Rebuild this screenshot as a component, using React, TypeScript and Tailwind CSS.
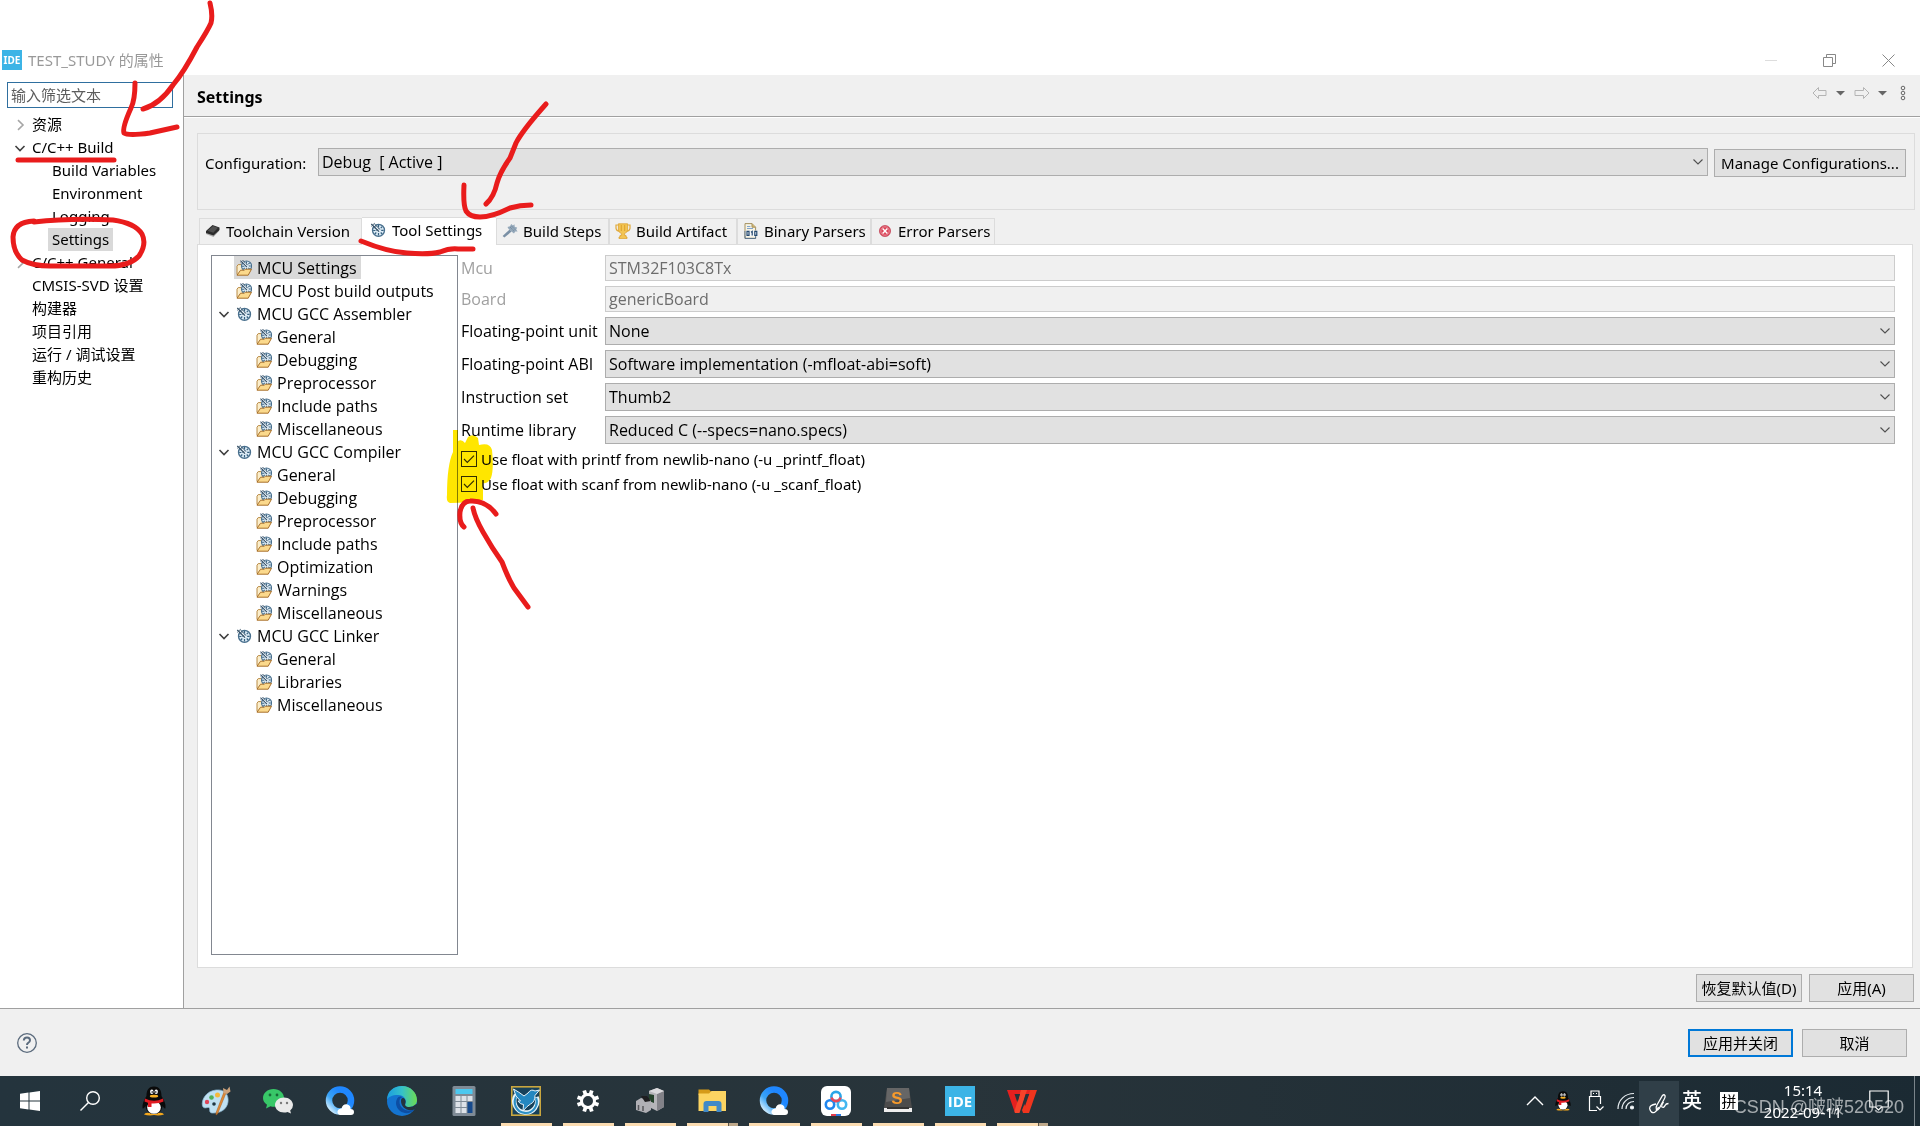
import React from 'react';

type IconProps = { className?: string };

const fontStack = 'font-["Noto_Sans","Noto_Sans_CJK_SC",sans-serif]';
const contentText = 'font-["Open_Sans","Noto_Sans_CJK_SC",sans-serif] text-[16px] leading-5';

function Chevron({ open }: { open: boolean }) {
  return (
    <svg viewBox="0 0 12 12" className="size-3 shrink-0" fill="none" aria-hidden="true">
      {open ? (
        <path d="M1.5 4 L6 8.5 L10.5 4" stroke="#404040" strokeWidth="1.6" />
      ) : (
        <path d="M4 1.2 L9 6 L4 10.8" stroke="#a6a6a6" strokeWidth="1.6" />
      )}
    </svg>
  );
}

function Dial() {
  return (
    <g>
      <circle cx="8.5" cy="8.3" r="6" fill="#dcebf6" stroke="#486f8d" strokeWidth="1.3" />
      <path d="M8.5 3v2.4M13.6 8.3h-2.4M8.5 13.4v-2.4M3.2 8.5h2.2M12.2 4.6l-1.5 1.5M12.2 12l-1.5-1.5M4.8 12l1.5-1.5" stroke="#35607f" strokeWidth="1.2" />
      <path d="M1.3 2 L9 9.7" stroke="#2f4a60" strokeWidth="1.2" />
      <path d="M2.8 1.8 L10 9" stroke="#eef4f8" strokeWidth="1" />
      <path d="M4.2 1.6 L10.4 7.8" stroke="#2f4a60" strokeWidth="1" strokeDasharray="1.6 .5" />
      <path d="M1.3 4.4 L4.4 1.4M4 6.4L6.6 3.8M6.4 8.8L9 6.2" stroke="#456178" strokeWidth=".9" />
    </g>
  );
}

function DialIcon({ className = 'size-4' }: IconProps) {
  return (
    <svg viewBox="0 0 16 16" className={className + ' shrink-0'} fill="none" aria-hidden="true">
      <Dial />
    </svg>
  );
}

function FolderIcon() {
  return (
    <svg viewBox="0 0 16 16" className="size-4 shrink-0" fill="none" aria-hidden="true">
      <path d="M1 14.5V6.2L2.2 4.6h3L6.4 6H11v4" fill="#fbeecb" stroke="#b98a45" />
      <g transform="translate(3.4 -1) scale(.84)">
        <Dial />
      </g>
      <path d="M1 15.2 L4.6 10.2H8.3L9.3 9.2H15.5L12.2 15.2Z" fill="#fbd98c" stroke="#a9702c" />
    </svg>
  );
}

function ChipIcon() {
  return (
    <svg viewBox="0 0 16 16" className="size-4 shrink-0" aria-hidden="true">
      <path d="M1 8.500v2.400L8.500 14l5.500-6V6L8 8Z" fill="#a8a8a8" />
      <path d="M1 8 L7.5 2 L14.500 4.5 V7 L8.500 12.5 L1 10Z" fill="#2b2b2b" />
      <path d="M2.5 7.8 L8 3 L13 4.700 L8.3 9.8Z" fill="#505050" />
    </svg>
  );
}

function HammerIcon() {
  return (
    <svg viewBox="0 0 16 16" className="size-4 shrink-0" aria-hidden="true">
      <path d="M7.6 6.6 L9.600 8.6 L2.4 14.600 L.6 13Z" fill="#7a90a5" />
      <path d="M5.500 4 L8 3.200 L9.200 1 L11 2.400 L12.400 1.2 L12.800 4 L15.200 4.600 L14.200 6.600 L15.600 8.400 L13.2 8.600 L12 10.400 L10.4 9.2 L6.6 6Z" fill="#93a7b9" />
      <path d="M9.500 3l4 4M8 4l4 4" stroke="#6c8297" strokeWidth="1" strokeDasharray="1 1" />
    </svg>
  );
}

function TrophyIcon() {
  return (
    <svg viewBox="0 0 16 16" className="size-4 shrink-0" fill="none" aria-hidden="true">
      <path d="M3.6 2H1v3.4Q1.4 8 4.6 8.4M12.4 2H15v3.4Q14.6 8 11.4 8.4" stroke="#e0a93a" strokeWidth="1.2" />
      <path d="M3.4.8H12.6V7Q12 10 9.4 10.6V12.4H11V14H12V15.6H4V14H5V12.4H6.6V10.6Q4 10 3.4 7Z" fill="#f3c553" stroke="#dca12f" strokeWidth=".8" />
      <path d="M6.3 2v6M9.7 2v6" stroke="#dca12f" />
    </svg>
  );
}

function BinaryIcon() {
  return (
    <svg viewBox="0 0 16 16" className="size-4 shrink-0" fill="none" aria-hidden="true">
      <path d="M2 .6H9L12.6 4.2V15.4H2Z" fill="#f6f3e4" stroke="#a59160" />
      <path d="M2 8V15.4H12.6V13" stroke="#54708e" />
      <path d="M9 .6V4.2H12.6" fill="#d5b871" stroke="#a59160" />
      <path d="M4 3.5h3.4M4 5.5h6" stroke="#7fa3cd" />
      <path d="M2.8 7.6H14.8V13.2H2.8Z" fill="#f6f7f9" />
      <path d="M4 8.4h2v4H4ZM9.2 12.6V8.4L8 9.2M11.8 8.4h2v4h-2Z" stroke="#24486f" strokeWidth="1.2" />
    </svg>
  );
}

function ErrorIcon() {
  return (
    <svg viewBox="0 0 16 16" className="size-4 shrink-0" fill="none" aria-hidden="true">
      <circle cx="8" cy="8" r="5.6" fill="#dc4458" stroke="#b8384c" strokeWidth=".6" />
      <path d="M5.6 5.6l4.8 4.8M10.4 5.6l-4.8 4.8" stroke="#fff" strokeWidth="1.4" />
      <circle cx="8" cy="8" r="4.2" stroke="#f0b9c0" strokeWidth=".6" />
    </svg>
  );
}

type Page = { label: string; level: number; open?: boolean; selected?: boolean };

const pages: Page[] = [
  { label: '资源', level: 0, open: false },
  { label: 'C/C++ Build', level: 0, open: true },
  { label: 'Build Variables', level: 1 },
  { label: 'Environment', level: 1 },
  { label: 'Logging', level: 1 },
  { label: 'Settings', level: 1, selected: true },
  { label: 'C/C++ General', level: 0, open: false },
  { label: 'CMSIS-SVD 设置', level: 0 },
  { label: '构建器', level: 0 },
  { label: '项目引用', level: 0 },
  { label: '运行 / 调试设置', level: 0 },
  { label: '重构历史', level: 0 },
];

function Sidebar() {
  return (
    <aside className="w-[184px] shrink-0 border-r border-[#a0a0a0] bg-white pt-[7px]">
      <input
        aria-label="输入筛选文本"
        placeholder="输入筛选文本"
        className="ml-[7px] block h-[26px] w-[166px] border border-[#2f6f9f] bg-white px-[3px] text-[15px] outline-none placeholder:text-[#5c5c5c]"
      />
      <ul className="mt-[5px]">
        {pages.map((p) => (
          <li key={p.label} className={p.level ? 'flex h-[23px] pl-12' : 'flex h-[23px] items-center gap-[2px] pl-[14px]'}>
            {p.level === 0 && (p.open === undefined ? <span className="w-3" /> : <Chevron open={p.open} />)}
            <button
              type="button"
              className={
                p.selected
                  ? 'h-[23px] bg-[#d9d9d9] px-1 leading-[23px] whitespace-nowrap'
                  : 'h-[23px] px-1 leading-[23px] whitespace-nowrap'
              }
            >
              {p.label}
            </button>
          </li>
        ))}
      </ul>
    </aside>
  );
}

const groups = [
  { label: 'MCU GCC Assembler', items: ['General', 'Debugging', 'Preprocessor', 'Include paths', 'Miscellaneous'] },
  {
    label: 'MCU GCC Compiler',
    items: ['General', 'Debugging', 'Preprocessor', 'Include paths', 'Optimization', 'Warnings', 'Miscellaneous'],
  },
  { label: 'MCU GCC Linker', items: ['General', 'Libraries', 'Miscellaneous'] },
];

function ToolTree() {
  return (
    <div className={contentText + ' w-[247px] shrink-0 border border-[#828790] bg-white'}>
      <button type="button" className="ml-[22px] flex h-[23px] items-center gap-[5px] bg-[#d9d9d9] pr-1 pl-[2px]">
        <FolderIcon />
        MCU Settings
      </button>
      <button type="button" className="ml-[22px] flex h-[23px] items-center gap-[5px] pl-[2px]">
        <FolderIcon />
        MCU Post build outputs
      </button>
      {groups.map((g) => (
        <div key={g.label}>
          <button type="button" className="ml-[6px] flex h-[23px] items-center">
            <Chevron open />
            <DialIcon className="mr-[5px] ml-[6px] size-4" />
            {g.label}
          </button>
          <ul>
            {g.items.map((i) => (
              <li key={i}>
                <button type="button" className="ml-11 flex h-[23px] items-center gap-[5px]">
                  <FolderIcon />
                  {i}
                </button>
              </li>
            ))}
          </ul>
        </div>
      ))}
    </div>
  );
}

function Combo({ id, value }: { id: string; value: string }) {
  return (
    <div className={contentText + ' relative flex-1'}>
      <select
        id={id}
        className="block h-7 w-full appearance-none border border-[#adadad] bg-[#e1e1e1] px-[3px] leading-[24px] outline-none"
      >
        <option>{value}</option>
      </select>
      <svg viewBox="0 0 12 12" className="pointer-events-none absolute top-2 right-1 size-3" fill="none" aria-hidden="true">
        <path d="M1.5 3.5 L6 8 L10.5 3.5" stroke="#505050" strokeWidth="1.1" />
      </svg>
    </div>
  );
}

const readOnly = [
  { id: 'mcu', label: 'Mcu', value: 'STM32F103C8Tx' },
  { id: 'board', label: 'Board', value: 'genericBoard' },
];
const combos = [
  { id: 'fpu', label: 'Floating-point unit', value: 'None' },
  { id: 'abi', label: 'Floating-point ABI', value: 'Software implementation (-mfloat-abi=soft)' },
  { id: 'iset', label: 'Instruction set', value: 'Thumb2' },
  { id: 'rtl', label: 'Runtime library', value: 'Reduced C (--specs=nano.specs)' },
];
const checks = [
  'Use float with printf from newlib-nano (-u _printf_float)',
  'Use float with scanf from newlib-nano (-u _scanf_float)',
];

function SettingsForm() {
  return (
    <form className="flex flex-1 flex-col gap-[5px] pr-[17px] pl-[3px]">
      {readOnly.map((r) => (
        <div key={r.id} className={contentText + ' flex h-[26px] items-center'}>
          <label htmlFor={r.id} className="w-36 text-[#a0a0a0]">
            {r.label}
          </label>
          <input
            id={r.id}
            defaultValue={r.value}
            disabled
            className="h-[26px] flex-1 border border-[#cccccc] bg-[#f0f0f0] px-[3px] text-[#6d6d6d]"
          />
        </div>
      ))}
      {combos.map((c) => (
        <div key={c.id} className={contentText + ' flex h-7 items-center'}>
          <label htmlFor={c.id} className="w-36 whitespace-nowrap">
            {c.label}
          </label>
          <Combo id={c.id} value={c.value} />
        </div>
      ))}
      <div className="flex flex-col gap-[5px]">
        {checks.map((c) => (
          <label key={c} className="flex h-5 items-center gap-1">
            <span className="relative size-4">
              <input type="checkbox" defaultChecked className="block size-4 appearance-none border border-[#333] bg-white" />
              <svg viewBox="0 0 16 16" className="pointer-events-none absolute inset-0 size-4" fill="none" aria-hidden="true">
                <path d="M3 8 L6.3 11.3 L13 4.6" stroke="#333" strokeWidth="1.2" />
              </svg>
            </span>
            {c}
          </label>
        ))}
      </div>
    </form>
  );
}

const tabs = [
  { label: 'Toolchain Version', icon: <ChipIcon />, width: 'w-[163px]' },
  { label: 'Tool Settings', icon: <DialIcon />, width: 'w-[134px]', active: true },
  { label: 'Build Steps', icon: <HammerIcon />, width: 'w-[113px]' },
  { label: 'Build Artifact', icon: <TrophyIcon />, width: 'w-[128px]' },
  { label: 'Binary Parsers', icon: <BinaryIcon />, width: 'w-[134px]' },
  { label: 'Error Parsers', icon: <ErrorIcon />, width: 'w-[124px]' },
];

const grayButton = 'h-7 border border-[#adadad] bg-[#e1e1e1] text-center leading-[26px] whitespace-nowrap';

function Main() {
  return (
    <main className="flex min-w-0 flex-1 flex-col bg-[#f0f0f0]">
      <header className="flex h-[42px] items-center justify-between border-b border-[#a0a0a0] pr-3 pl-[13px]">
        <h1 className="pt-[3px] text-[16px] font-bold">Settings</h1>
        <svg viewBox="0 0 96 18" className="mb-[6px] h-[18px] w-24" fill="none" aria-label="Navigation">
          <path d="M1 9 L6.5 3.5V6.5H14V11.5H6.5V14.5Z" stroke="#b4b4b4" />
          <path d="M24 7H33L28.5 11.5Z" fill="#666" />
          <path d="M57 9 L51.5 3.5V6.5H43V11.5H51.5V14.5Z" stroke="#b4b4b4" />
          <path d="M66 7H75L70.5 11.5Z" fill="#666" />
          <circle cx="91" cy="4" r="1.8" stroke="#666" />
          <circle cx="91" cy="9" r="1.8" stroke="#666" />
          <circle cx="91" cy="14" r="1.8" stroke="#666" />
        </svg>
      </header>
      <div className="flex flex-1 flex-col border-t border-white px-[5px] pt-[15px]">
        <section className="ml-2 flex h-[77px] border border-[#dcdcdc] pt-[14px] pr-2 pl-[7px]">
          <label htmlFor="config" className="h-7 w-[113px] leading-[30px]">
            Configuration:
          </label>
          <Combo id="config" value={'Debug\u00a0\u00a0[ Active ]'} />
          <button type="button" className={grayButton + ' mt-px ml-[6px] w-48'}>
            Manage Configurations...
          </button>
        </section>

        <div role="tablist" className="mt-[6px] ml-[10px] flex h-7 items-end">
          {tabs.map((t) => (
            <button
              key={t.label}
              type="button"
              role="tab"
              aria-selected={!!t.active}
              className={
                t.width +
                (t.active
                  ? ' relative -mb-px flex h-7 shrink-0 items-center gap-[6px] border-t border-[#dcdcdc] bg-white pb-[3px] pl-2 whitespace-nowrap'
                  : ' flex h-[26px] shrink-0 items-center gap-[5px] border-t border-r border-l border-[#dcdcdc] pb-px pl-[5px] whitespace-nowrap')
              }
            >
              {t.icon}
              {t.label}
            </button>
          ))}
        </div>

        <section className="mr-[2px] ml-2 flex flex-1 border border-[#dcdcdc] bg-white pt-[10px] pb-3 pl-[13px]">
          <ToolTree />
          <SettingsForm />
        </section>

        <div className="flex h-10 items-center justify-end gap-[7px] pr-px">
          <button type="button" className={grayButton + ' w-[106px]'}>
            恢复默认值(D)
          </button>
          <button type="button" className={grayButton + ' w-[105px]'}>
            应用(A)
          </button>
        </div>
      </div>
    </main>
  );
}

function Penguin({ className }: IconProps) {
  return (
    <svg viewBox="0 0 30 30" className={className} aria-hidden="true">
      <path d="M5 28.500Q6 26 11 27Q15 29 19 27Q24 26 25 28.500Q20 30 15 29Q10 30 5 28.500Z" fill="#f5a81c" />
      <path d="M15 .5C9 .5 7.500 5 7.500 10C5 14 3 18 3.500 22C4 23.500 5.500 21.500 6.500 20C7 25 10 28 15 28S23 25 23.500 20C24.500 21.500 26 23.500 26.500 22C27 18 25 14 22.500 10C22.500 5 21 .5 15 .5Z" fill="#0a0a0a" />
      <ellipse cx="15" cy="21.500" rx="6.800" ry="6.300" fill="#fff" />
      <ellipse cx="12.800" cy="5.800" rx="1.700" ry="2.300" fill="#fff" />
      <ellipse cx="17.200" cy="5.800" rx="1.700" ry="2.300" fill="#fff" />
      <circle cx="13.200" cy="6" r=".8" fill="#000" />
      <circle cx="16.800" cy="6" r=".8" fill="#000" />
      <ellipse cx="15" cy="10.200" rx="4.200" ry="1.400" fill="#f8b021" />
      <path d="M6 12.500Q15 17 24 12.500L24.500 15.500Q20 18 12.500 17.500V21H9V16.800L5.500 15.500Z" fill="#e01b22" />
    </svg>
  );
}

const CloudQ = ({ id }: { id: string }) => (
  <>
    <defs>
      <linearGradient id={id} x1="1" y1="0" x2="0" y2="1">
        <stop offset=".3" stopColor="#1f87ff" />
        <stop offset=".65" stopColor="#3aa4f6" />
        <stop offset="1" stopColor="#e5f6ff" />
      </linearGradient>
    </defs>
    <circle cx="15" cy="14.500" r="11" fill="none" stroke={'url(#' + id + ')'} strokeWidth="6.500" />
    <path d="M15 29Q12 28 12.500 25Q13.500 22 16.500 22.500Q18 17.500 22.500 18.500Q26 19.500 25.500 23Q29 23 29 26Q29 29 26 29Z" fill="#fff" />
  </>
);

const apps: { name: string; art: React.ReactNode; running?: boolean; stacked?: boolean }[] = [
  {
    name: '画图',
    art: (
      <>
        <path d="M15 4C24 3 28 9 27 16C26 23 20 27.500 11 27C7 26.500 10 22 7.500 21.500C5 21.500 3 23 1.500 20C0 14 5 5 15 4Z" fill="#bfe0f2" stroke="#8db8d2" strokeWidth=".7" />
        <circle cx="6" cy="16" r="2.200" fill="#e0465a" />
        <circle cx="10.500" cy="11.500" r="2.300" fill="#50b05a" />
        <circle cx="16.500" cy="9" r="2.500" fill="#f5b93a" />
        <circle cx="13" cy="18" r="1.800" fill="#1f3642" />
        <path d="M25 7 L16.500 28 L15 29 L15.300 26 L23 6Z" fill="#e08a37" stroke="#a65a1b" strokeWidth=".5" />
        <path d="M22 2 L26 4 L28.500 .5 L29.500 5.500 L26 8 L22.500 7Z" fill="#cda27a" />
      </>
    ),
  },
  {
    name: '微信',
    art: (
      <>
        <path d="M10.500 3C4.500 3 0 7 0 12Q0 16 4 18.800L3 22.500L7.500 20.300Q9 20.800 11 20.800C17 20.800 21 17 21 12S16.500 3 10.500 3Z" fill="#38c768" />
        <circle cx="7" cy="9" r="1.400" fill="#176b38" />
        <circle cx="14" cy="9" r="1.400" fill="#176b38" />
        <path d="M21 11.500C16 11.500 12 15 12 19S16 26.500 21 26.500Q23 26.500 24.500 26L28 27.500L27.200 24.600Q30 22.500 30 19C30 15 26 11.500 21 11.500Z" fill="#e9e9e9" />
        <circle cx="18" cy="17" r="1.200" fill="#777" />
        <circle cx="24" cy="17" r="1.200" fill="#777" />
      </>
    ),
  },
  { name: 'QQ浏览器', art: <CloudQ id="cq1" /> },
  {
    name: 'Edge',
    art: (
      <>
        <defs>
          <linearGradient id="edgeTop" x1="0" x2="1">
            <stop offset="0" stopColor="#1b9de0" />
            <stop offset=".5" stopColor="#35c1c9" />
            <stop offset="1" stopColor="#6ddb51" />
          </linearGradient>
        </defs>
        <circle cx="15" cy="15" r="15" fill="#1474d0" />
        <path d="M0 14C0 5 7 0 15 0C24 0 30 7 30 14C30 19 26 21 22 21C19 21 17.500 19.500 18.500 17.500C20 14 17 9 11 9C5 9 1 11 0 14Z" fill="url(#edgeTop)" />
        <path d="M11.500 11C8 14 8 21 13 25C18 28.500 24 27.500 27.500 23.500C21 26.500 12 23 12.500 15Q12.500 12 15.500 11.200Q13.500 10 11.500 11Z" fill="#0d4ea3" />
        <path d="M14 15Q14 11.500 16.500 12Q19.500 14 18.300 17.500C17.500 19.500 19 21 22 21Q26 21 28.500 18.500L30 18V20Q28 22.500 27.500 23.500C20 26 14 21 14 15Z" fill="#24333d" />
      </>
    ),
  },
  {
    name: '计算器',
    art: (
      <>
        <rect x="3.500" width="23" height="30" rx="1.500" fill="#7f8b96" />
        <rect x="6.500" y="3" width="17" height="5" fill="#4cc8ef" />
        <path d="M6.500 10h5v5h-5ZM12.500 10h5v5h-5ZM18.500 10h5v5h-5ZM6.500 16h5v5h-5ZM12.500 16h5v5h-5ZM6.500 22h5v5h-5ZM12.500 22h5v5h-5Z" fill="#dde2e8" />
        <path d="M18.500 16h5v11h-5Z" fill="#174a8c" />
      </>
    ),
  },
  {
    name: 'Hummingbird',
    running: true,
    art: (
      <>
        <rect x=".8" y=".8" width="28.400" height="28.400" fill="#17415a" stroke="#c9a63e" strokeWidth="1.600" />
        <path d="M5 9A11.500 11.500 0 1 0 25.500 11" fill="none" stroke="#e6f4fb" strokeWidth="4.500" />
        <path d="M5.500 10A11 11 0 1 0 25 12" fill="none" stroke="#2c8fc4" strokeWidth="2.200" />
        <path d="M2.500 3Q8 6 13 10L17 7Q20 2.500 24 5L28.500 4L24 9.500Q24 16 19.500 18Q16 20 12 25L12.500 18.500Q9 18.500 7 15L9.500 15Q4 11 2.500 3Z" fill="#2387c0" stroke="#e6f4fb" strokeWidth="1" />
      </>
    ),
  },
  {
    name: '设置',
    running: true,
    art: (
      <>
        <g stroke="#fff" strokeWidth="3.800">
          <path d="M11.200 4.500L12.700 9M18.800 4.500L17.300 9M11.200 25.500L12.700 21M18.800 25.500L17.300 21M4.500 11.200L9 12.700M4.500 18.800L9 17.300M25.500 11.200L21 12.700M25.500 18.800L21 17.300" />
        </g>
        <circle cx="15" cy="15" r="6.500" fill="#27353d" stroke="#fff" strokeWidth="3" />
      </>
    ),
  },
  {
    name: '设备',
    running: true,
    art: (
      <>
        <path d="M14 5L22 2L29 5V21L22 25L14 21Z" fill="#b5b5b9" />
        <path d="M22 8L29 5V21L22 25Z" fill="#828288" />
        <path d="M14 5L22 2L29 5L22 8Z" fill="#dadadd" />
        <path d="M14 8L19 9V17L14 15Z" fill="#24422a" />
        <path d="M1 15L6 12L16 14V24L11 27L1 24Z" fill="#b0b0b5" />
        <path d="M6 10L12 10L16 15L10 16Z" fill="#1e1e20" />
        <path d="M3.500 19V24M8 20V25" stroke="#55555a" strokeWidth="1.500" />
      </>
    ),
  },
  {
    name: '文件资源管理器',
    running: true,
    stacked: true,
    art: (
      <>
        <path d="M1.500 3.500H12L14.500 6V9H1.500Z" fill="#d59a19" />
        <path d="M1.500 7.500H12L14.500 5H29V25H1.500Z" fill="#fcd462" />
        <path d="M6.500 26V18Q6.500 15 9.500 15H21.500Q24.500 15 24.500 18V26H19.500V20H11.500V26Z" fill="#4189c7" />
      </>
    ),
  },
  { name: 'QQ浏览器', running: true, art: <CloudQ id="cq2" /> },
  {
    name: '百度网盘',
    running: true,
    art: (
      <>
        <rect width="30" height="30" rx="6" fill="#fff" />
        <g fill="none" strokeWidth="2.600">
          <circle cx="9" cy="18.500" r="4.200" stroke="#1f86ef" />
          <circle cx="21" cy="18.500" r="4.200" stroke="#42b7f0" />
          <circle cx="15" cy="10.500" r="4.600" stroke="#29a5e8" />
          <path d="M10.500 11.500Q11.500 15 15 15.100T19.500 11.500" stroke="#e8495a" />
        </g>
        <path d="M10 28H15V30H10Z" fill="#e33c4d" />
        <path d="M15 28H20V30H15Z" fill="#2b7be0" />
      </>
    ),
  },
  {
    name: 'Sublime Text',
    running: true,
    art: (
      <>
        <path d="M4 2H26L29 22V25H1V22Z" fill="#4c4c4c" />
        <path d="M4 2H26L27 12L3 16Z" fill="#666" />
        <path d="M1 22H29V26H1Z" fill="#eee" />
        <path d="M4 21H26V23H4Z" fill="#333" />
        <text x="14" y="18" fontSize="17" fontWeight="700" fill="#f79a2b" textAnchor="middle" fontFamily="Liberation Sans">
          S
        </text>
      </>
    ),
  },
  {
    name: 'STM32CubeIDE',
    running: true,
    art: (
      <>
        <rect width="30" height="30" fill="#3cb4e6" />
        <text x="15" y="20.500" fontSize="15" fontWeight="700" fill="#fff" textAnchor="middle" fontFamily="Open Sans">
          IDE
        </text>
      </>
    ),
  },
  {
    name: 'WPS',
    running: true,
    stacked: true,
    art: (
      <>
        <path d="M0 4H28.500L27 8H7.500L11.500 20L9.500 27H8Z" fill="#e5201f" />
        <path d="M14 4H20L12.500 27H8L7.500 25Z" fill="#f5432a" />
        <path d="M23.500 4H30L22 27H16L15 24Z" fill="#f0351e" />
        <path d="M9 8H13L11 15ZM19 8H22.300L18 20L16.500 16Z" fill="#27323a" />
      </>
    ),
  },
];

function Taskbar() {
  return (
    <footer className="relative flex h-[50px] items-stretch bg-linear-to-r from-[#24343d] via-[#28343a] to-[#1b2a33] text-white">
      <button type="button" aria-label="开始" className="flex w-[60px] items-center justify-center">
        <svg viewBox="0 0 20 20" className="size-5" fill="#fff" aria-hidden="true">
          <path d="M0 2.800L8.500 1.600V9.500H0ZM9.500 1.500L20 0V9.500H9.500ZM0 10.500H8.500V18.500L0 17.300ZM9.500 10.500H20V20L9.500 18.600Z" />
        </svg>
      </button>
      <button type="button" aria-label="搜索" className="flex w-[60px] items-center justify-center">
        <svg viewBox="0 0 20 20" className="size-5" fill="none" stroke="#fff" strokeWidth="1.400" aria-hidden="true">
          <circle cx="13" cy="7" r="6.300" />
          <path d="M8.500 11.500L.5 19.500" />
        </svg>
      </button>
      <button type="button" aria-label="QQ" className="ml-[3px] flex w-[62px] items-center justify-center">
        <Penguin className="size-[30px]" />
      </button>
      {apps.map((a, i) => (
        <button key={i} type="button" aria-label={a.name} className="flex w-[62px] flex-col items-center justify-between pt-[10px]">
          <svg viewBox="0 0 30 30" className="size-[30px]" aria-hidden="true">
            {a.art}
          </svg>
          {a.running && (
            <span className="flex h-[3px] w-[51px] bg-[#fbdcb1]">
              {a.stacked && <span className="ml-auto h-[3px] w-[10px] border-l border-[#5c5347] bg-[#bfa98b]" />}
            </span>
          )}
        </button>
      ))}

      <div className="ml-auto flex items-center">
        <svg viewBox="0 0 18 10" className="mr-[9px] h-[10px] w-[18px]" fill="none" stroke="#fff" strokeWidth="1.400" aria-label="显示隐藏的图标">
          <path d="M1 9L9 1L17 9" />
        </svg>
        <Penguin className="mr-[15px] size-5" />
        <svg viewBox="0 0 16 22" className="mr-[13px] h-[22px] w-4" fill="none" stroke="#fff" strokeWidth="1.200" aria-label="USB">
          <path d="M3 6V1H11V6M9 20.500H1.500V6.500H12.500V14M8.500 16.500L12 20L15.500 16.500" />
          <path d="M5 3.500h1M8 3.500h1" />
        </svg>
        <svg viewBox="0 0 18 18" className="mr-1 size-[18px]" fill="none" stroke="#e8eef2" strokeWidth="1.200" aria-label="网络">
          <path d="M1 17C1 8 8 1.500 17 1.500M5 17C5 10.500 10.500 5.500 17 5.500M9 17C9 12.500 12.500 9.500 17 9.500" />
          <circle cx="15" cy="15.500" r="1.500" fill="#fff" />
        </svg>
        <span className="flex h-full w-10 items-end">
          <span className="flex h-[45px] w-10 items-center justify-center bg-[#303f48]">
            <svg viewBox="0 0 20 20" className="size-5" fill="none" stroke="#fff" strokeWidth="1.300" aria-label="Windows Ink">
              <path d="M7.500 16Q6.500 13 8 11L13.500 1.500Q15 0 16 1.500Q16.500 3 15.500 4.500L10.500 14Q9 16 7.500 16Z" />
              <path d="M7 10Q0 11 .8 15Q2 19.500 5.500 18.500Q8 17 9.500 13M14.500 8Q12 12 13 13Q15 14 16 11.500Q17 9.500 19.500 9.500" />
            </svg>
          </span>
        </span>
        <span className="ml-[3px] w-5 text-[20px] font-medium">英</span>
        <span className="ml-[18px] flex size-[18px] items-center justify-center bg-white text-[15px] text-black">拼</span>
        <div className="ml-6 flex w-[82px] flex-col text-center text-[15px] leading-[22px]">
          <time>15:14</time>
          <time className="whitespace-nowrap">2022-09-11</time>
        </div>
        <svg viewBox="0 0 20 22" className="ml-[25px] h-[22px] w-5" fill="none" stroke="#fff" strokeWidth="1.200" aria-label="通知">
          <path d="M.8 1H19.200V17H12.500L9.500 20L6.500 17H.8Z" />
        </svg>
        <span className="mr-[5px] ml-[25px] h-[50px] w-px bg-[#7b858b]" />
      </div>
      <span className="absolute top-5 right-4 font-['Liberation_Sans','Noto_Sans_CJK_SC'] text-[18px] leading-[22px] whitespace-nowrap text-white/60">
        CSDN @啵啵520520
      </span>
    </footer>
  );
}

function Highlighter() {
  return (
    <svg
      viewBox="0 0 500 510"
      className="pointer-events-none absolute top-0 left-0 h-[510px] w-[500px] mix-blend-multiply"
      aria-hidden="true"
    >
      <path
        fill="#ffe600"
        d="M453 430H458V441Q462 439 465 443L468 437Q473 433 478 438L479 445Q490 442 492 450Q494 470 491 478Q488 484 483 483V500Q468 503 450 503Q446 502 447 495Q447 465 453 452Z"
      />
    </svg>
  );
}

function RedInk() {
  return (
    <svg
      viewBox="0 0 600 620"
      className="pointer-events-none absolute top-0 left-0 h-[620px] w-[600px]"
      fill="none"
      stroke="#e91c1c"
      strokeWidth="5"
      strokeLinecap="round"
      strokeLinejoin="round"
      aria-hidden="true"
    >
      <path d="M210 3Q213 15 211 23Q208 30 197 47Q184 72 173 85Q160 104 143 109" />
      <path d="M135 83Q135 100 131 108Q122 128 124 133Q128 136 150 133L177 127" />
      <path d="M18 160H114" />
      <path d="M34 221Q14 222 13 237Q13 252 22 260Q33 266 50 266H110Q130 266 139 256Q147 244 142 234Q135 223 113 220Q70 218 34 222" />
      <path d="M546 104Q522 131 516 143L510 158Q500 172 497 183Q494 197 486 204" />
      <path d="M464 185Q463 205 466 211Q470 217 480 217Q492 217 510 208Q520 205 531 205" />
      <path d="M361 241Q388 252 407 253Q428 255 440 252Q450 248 458 249H473" />
      <path d="M473 508Q475 518 483 532Q492 548 502 562Q508 578 514 588L528 607" />
      <path d="M464 527Q459 523 460 512Q462 501 470 501Q486 500 496 514" />
    </svg>
  );
}

export default function App() {
  return (
    <div className={fontStack + ' relative flex min-h-screen flex-col bg-white text-[15px] leading-5 text-black'}>
      <div className="flex h-[75px] items-end justify-between pr-[25px] pb-[5px] pl-[2px]">
        <div className="flex items-center gap-[6px] text-[#999]">
          <span className="flex size-5 items-center justify-center bg-[#3cb4e6] text-[10px] font-bold text-white">IDE</span>
          <span>TEST_STUDY 的属性</span>
        </div>
        <div className="flex h-5 items-center">
          <button type="button" aria-label="最小化" className="mr-[46px] h-px w-3 bg-[#ddd]" />
          <button type="button" aria-label="还原" className="mr-[46px]">
            <svg viewBox="0 0 13 13" className="size-[13px]" fill="none" stroke="#888" aria-hidden="true">
              <path d="M.5 3.500H9.500V12.500H.5ZM3.500 3.500V.5H12.500V9.500H9.500" />
            </svg>
          </button>
          <button type="button" aria-label="关闭">
            <svg viewBox="0 0 13 13" className="size-[13px]" fill="none" stroke="#888" aria-hidden="true">
              <path d="M.5.5L12.500 12.500M12.500.5L.5 12.500" />
            </svg>
          </button>
        </div>
      </div>
      <div className="flex flex-1">
        <Sidebar />
        <Main />
      </div>
      <div className="flex h-[68px] items-center justify-between border-t border-[#a0a0a0] bg-[#f0f0f0] pr-[13px] pl-[17px]">
        <button type="button" aria-label="帮助">
          <svg viewBox="0 0 20 20" className="size-5" fill="none" stroke="#5b6b7d" aria-hidden="true">
            <circle cx="10" cy="10" r="9.300" strokeWidth="1.300" />
            <path d="M6.800 7.500Q7 4.500 10 4.500T13 7.300Q13 9 11.200 9.800Q10 10.500 10 12" strokeWidth="2" />
            <path d="M10 13.500V15.500" strokeWidth="2" />
          </svg>
        </button>
        <div className="flex gap-[9px]">
          <button type="button" className="h-7 w-[105px] border-2 border-[#0078d7] bg-[#e1e1e1] text-center leading-6">
            应用并关闭
          </button>
          <button type="button" className={grayButton + ' w-[105px]'}>
            取消
          </button>
        </div>
      </div>
      <Taskbar />
      <Highlighter />
      <RedInk />
    </div>
  );
}
